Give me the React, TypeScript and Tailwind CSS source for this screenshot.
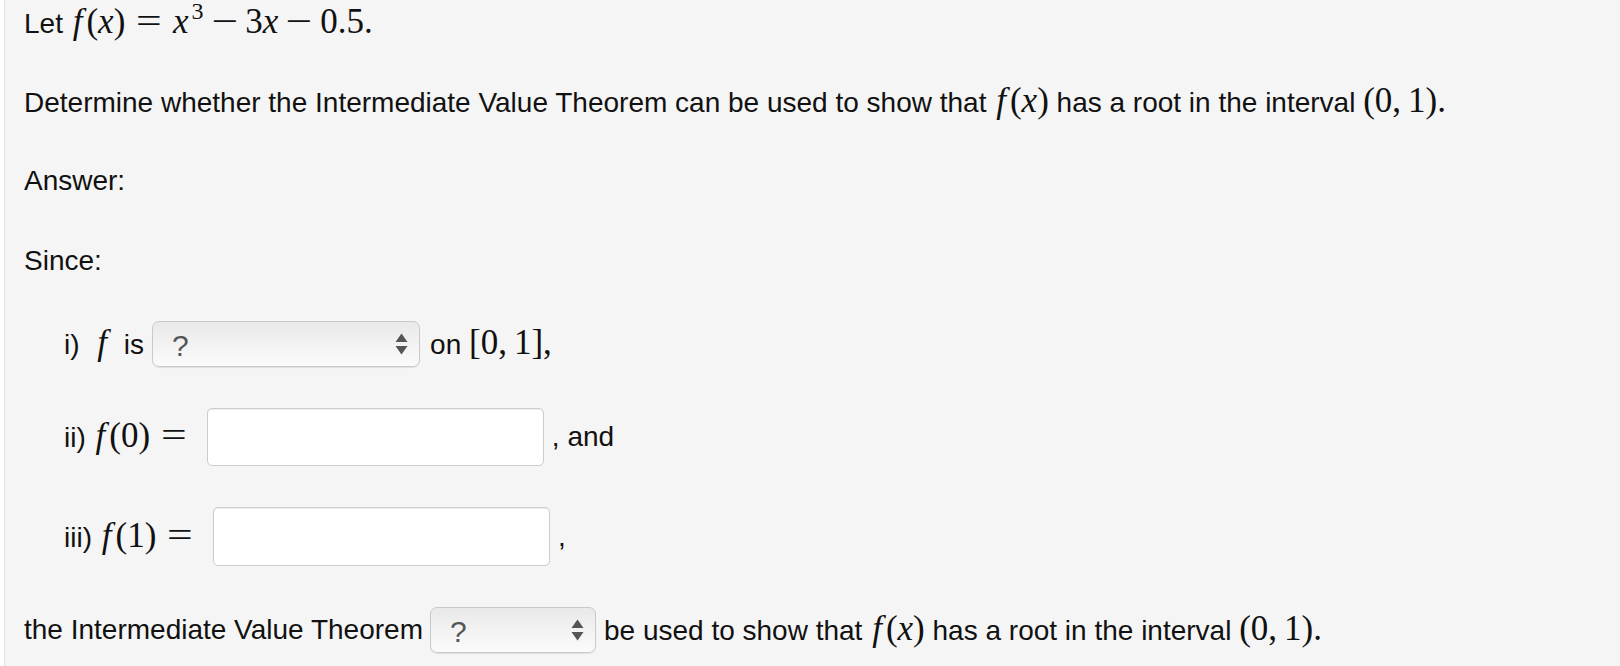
import React from "react";

type C = { children?: React.ReactNode };

function M({ children }: C) {
  return (
    <span className="font-['Liberation_Serif','Times_New_Roman',serif] text-[35px] whitespace-nowrap">
      {children}
    </span>
  );
}
function X() {
  return <i className="italic">x</i>;
}
function Rel({ children }: C) {
  return <span className="inline-block mx-[14px] scale-x-[1.3]">{children}</span>;
}
function Bin({ children }: C) {
  return <span className="inline-block mx-[11px] scale-x-[1.35]">{children}</span>;
}
function F() {
  return <i className="italic ml-[2px] mr-[4px]">f</i>;
}

function Arrows() {
  return (
    <svg width="13" height="24" viewBox="0 0 13 24" className="shrink-0">
      <path d="M6.5 1.5 L12.5 10 L0.5 10 Z" fill="#555" />
      <path d="M6.5 22.5 L12.5 14 L0.5 14 Z" fill="#555" />
    </svg>
  );
}

function SelectBox({ className }: { className: string }) {
  return (
    <div
      className={
        "flex items-center justify-between rounded-[7px] border border-[#c9c9c9] bg-gradient-to-b from-[#e9e9e9] to-[#fbfbfb] shadow-[0_1px_1px_rgba(0,0,0,0.08)] pl-[19px] pr-[11px] " +
        className
      }
    >
      <span className="text-[30px] text-[#555] leading-none pt-[4px]">?</span>
      <Arrows />
    </div>
  );
}

function InputBox({ className }: { className: string }) {
  return (
    <div
      className={
        "rounded-[5px] border border-[#cccccc] bg-white shadow-[inset_0_1px_1px_rgba(0,0,0,0.075)] " +
        className
      }
    />
  );
}

function Interval() {
  return (
    <M>
      (0,<span className="ml-[7px]">1</span>).
    </M>
  );
}

export default function App() {
  return (
    <div className="bg-white w-[1620px] h-[666px] overflow-hidden font-['Liberation_Sans',Arial,Helvetica,sans-serif] text-[28px] text-[#111]">
      <div className="ml-[4px] h-[666px] border-l border-[#e2e2e2] bg-[#f5f5f5] pl-[19px] leading-[40px]">
        <div className="h-[80px] pt-[2px]">
          Let{" "}
          <M>
            <F />
            (<X />)<Rel>=</Rel>
            <X />
            <span className="relative -top-[14px] text-[24px] leading-none ml-[3px]">3</span>
            <Bin>−</Bin>3<X />
            <Bin>−</Bin>0.5.
          </M>
        </div>
        <div className="h-[80px] pt-[1px]">
          Determine whether the Intermediate Value Theorem can be used to show that{" "}
          <M>
            <F />
            (<X />)
          </M>{" "}
          has a root in the interval <Interval />
        </div>
        <div className="h-[80px] pt-[1px]">Answer:</div>
        <div className="h-[80px] pt-[1px]">Since:</div>

        <div className="mt-[1px] ml-[40px] h-[46px] flex items-center">
          <span className="whitespace-nowrap">
            i){" "}
            <M>
              <i className="italic ml-[10px] mr-[9px]">f</i>
            </M>{" "}
            is
          </span>
          <SelectBox className="ml-[8px] w-[268px] h-[46px]" />
          <span className="ml-[10px] whitespace-nowrap">
            on{" "}
            <M>
              [0,<span className="ml-[7px]">1</span>],
            </M>
          </span>
        </div>

        <div className="mt-[41px] ml-[40px] h-[58px] flex items-center">
          <span className="whitespace-nowrap">
            ii){" "}
            <M>
              <F />
              (0)<Rel>=</Rel>
            </M>
          </span>
          <InputBox className="ml-[9px] w-[337px] h-[58px]" />
          <span className="ml-[8px] whitespace-nowrap">, and</span>
        </div>

        <div className="mt-[41px] ml-[40px] h-[59px] flex items-center">
          <span className="whitespace-nowrap">
            iii){" "}
            <M>
              <F />
              (1)<Rel>=</Rel>
            </M>
          </span>
          <InputBox className="ml-[9px] w-[337px] h-[59px]" />
          <span className="ml-[8px] whitespace-nowrap">,</span>
        </div>

        <div className="mt-[41px] h-[46px] flex items-center">
          <span className="whitespace-nowrap">the Intermediate Value Theorem</span>
          <SelectBox className="ml-[7px] w-[166px] h-[46px]" />
          <span className="ml-[8px] whitespace-nowrap">
            be used to show that{" "}
            <M>
              <F />
              (<X />)
            </M>{" "}
            has a root in the interval <Interval />
          </span>
        </div>
      </div>
    </div>
  );
}
